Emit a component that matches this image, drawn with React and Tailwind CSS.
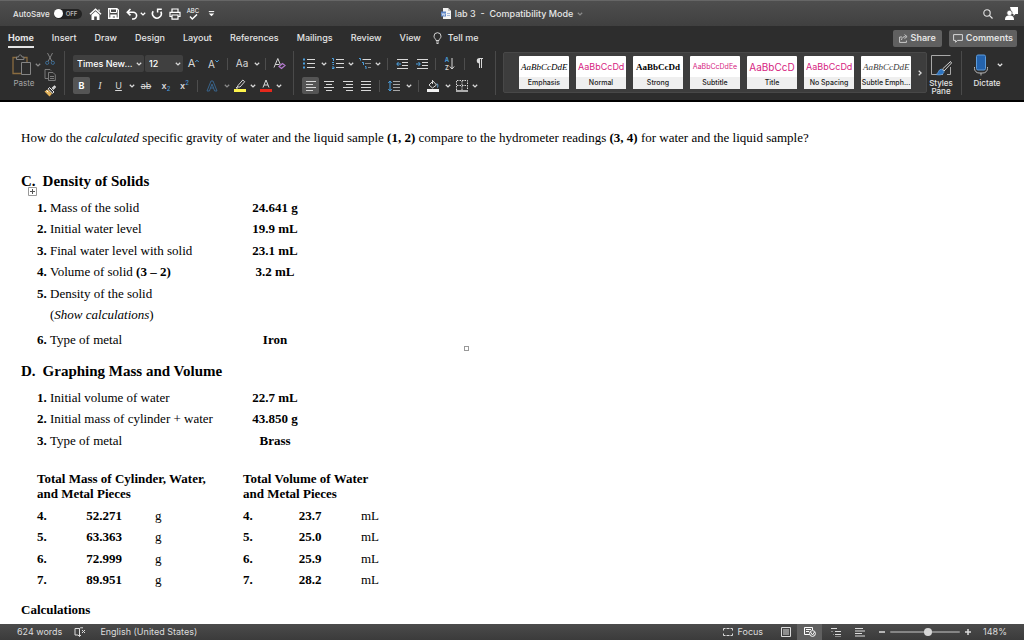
/**
 * App.jsx — word processor window.
 *
 * Title bar, ribbon tabs, Home ribbon, document page and status bar.
 */
import { useState } from 'react'

// ─── Data ────────────────────────────────────────────────────────────────────

const TABS = ['Home', 'Insert', 'Draw', 'Design', 'Layout', 'References', 'Mailings', 'Review', 'View']

const STYLES = [
  { label: 'Emphasis', sample: 'AaBbCcDdE', look: 'font-["Liberation_Serif",serif] italic text-[9px] text-black' },
  { label: 'Normal', sample: 'AaBbCcDd', look: 'text-[9px] text-[#d6247f]' },
  { label: 'Strong', sample: 'AaBbCcDd', look: 'font-["Liberation_Serif",serif] font-bold text-[9px] text-black' },
  { label: 'Subtitle', sample: 'AaBbCcDdEe', look: 'text-[7px] text-[#d6247f]' },
  { label: 'Title', sample: 'AaBbCcD', look: 'text-[10px] text-[#d6247f]' },
  { label: 'No Spacing', sample: 'AaBbCcDd', look: 'text-[9px] text-[#d6247f]' },
  { label: 'Subtle Emph...', sample: 'AaBbCcDdE', look: 'font-["Liberation_Serif",serif] italic text-[9px] text-[#404040]' },
]

const SOLIDS = [
  { no: '1.', label: 'Mass of the solid', value: '24.641 g' },
  { no: '2.', label: 'Initial water level', value: '19.9 mL' },
  { no: '3.', label: 'Final water level with solid', value: '23.1 mL' },
  { no: '4.', label: <>Volume of solid <b>(3 – 2)</b></>, value: '3.2 mL' },
  { no: '5.', label: 'Density of the solid', value: '' },
  { no: '', label: <>(<i>Show calculations</i>)</>, value: '' },
  { no: '6.', label: 'Type of metal', value: 'Iron', tall: true },
]

const GRAPHING = [
  { no: '1.', label: 'Initial volume of water', value: '22.7 mL' },
  { no: '2.', label: 'Initial mass of cylinder + water', value: '43.850 g' },
  { no: '3.', label: 'Type of metal', value: 'Brass' },
]

const TOTALS = [
  { no: '4.', mass: '52.271', volume: '23.7' },
  { no: '5.', mass: '63.363', volume: '25.0' },
  { no: '6.', mass: '72.999', volume: '25.9' },
  { no: '7.', mass: '89.951', volume: '28.2' },
]

// ─── Small building blocks ───────────────────────────────────────────────────

function Icon({ w = 12, h = 12, className = '', children }) {
  return (
    <svg
      width={w}
      height={h}
      viewBox={`0 0 ${w} ${h}`}
      fill="none"
      stroke="currentColor"
      className={`shrink-0 ${className}`}
      aria-hidden="true"
    >
      {children}
    </svg>
  )
}

function Chevron({ className = '' }) {
  return (
    <Icon w={6} h={4} className={className}>
      <path d="M.8 .7 3 2.9 5.2 .7" strokeWidth="1.3" />
    </Icon>
  )
}

function Tool({ label, className = 'w-5', active = false, children }) {
  return (
    <button
      type="button"
      aria-label={label}
      className={`flex h-[17px] shrink-0 items-center justify-center rounded-[2px] ${active ? 'bg-[#555555]' : ''} ${className}`}
    >
      {children}
    </button>
  )
}

function More({ label, className = 'w-[9px]' }) {
  return (
    <Tool label={label} className={className}>
      <Chevron />
    </Tool>
  )
}

// Short separator between tools of one row
function Sep() {
  return (
    <span className="flex w-[9px] shrink-0 justify-center">
      <span className="h-3 w-px bg-[#4d4d4d]" />
    </span>
  )
}

// Full-height separator between ribbon groups
function Divider({ className = 'w-3' }) {
  return (
    <span className={`flex shrink-0 justify-center ${className}`}>
      <span className="mt-px h-[44px] w-px bg-[#4a4a4a]" />
    </span>
  )
}

// ─── Title bar ───────────────────────────────────────────────────────────────

function TitleBar() {
  return (
    <header className="grid h-[26px] grid-cols-[1fr_auto_1fr] items-center border-t border-[#666666] bg-linear-to-b from-[#4e4e4e] to-[#404040] px-[13px] text-[#e6e6e6]">
      <div className="flex items-center">
        <label className="flex items-center gap-1 text-[8px] font-medium">
          AutoSave
          <span className="relative flex h-[10px] w-7 items-center rounded-full bg-[#232323]">
            <input type="checkbox" className="absolute inset-0 appearance-none" />
            <span className="size-[9px] rounded-full bg-white" />
            <span className="pl-[3px] text-[6px] leading-none font-semibold text-[#b5b5b5]">OFF</span>
          </span>
        </label>
        <div className="flex items-center pl-[7px] text-white">
          <button type="button" aria-label="Home" className="w-[19px]">
            <Icon w={13} h={12}>
              <path d="M1 6.2 6.5 1.2 12 6.2" strokeWidth="1.5" />
              <path d="M9.3 1.4h1.4v2.4L9.3 2.6z" fill="currentColor" stroke="none" />
              <path d="M2.5 6.8 6.5 3.2l4 3.6V12H7.8V8.4H5.2V12H2.5z" fill="currentColor" stroke="none" />
            </Icon>
          </button>
          <button type="button" aria-label="Save" className="w-[18px]">
            <Icon w={11} h={11}>
              <path d="M.7 .7h8.2l1.4 1.400v8.200H.7z" strokeWidth="1.4" />
              <path d="M2.500 .7v3.800h6V.7" />
              <path d="M2.300 6.500h6.400V11H7V8.500H4.800V11H2.300z" fill="currentColor" stroke="none" />
            </Icon>
          </button>
          <button type="button" aria-label="Undo" className="w-[14px]">
            <Icon w={12} h={12}>
              <path d="M4.5 1 1.3 4.2l3.2 3.2M1.5 4.2h5.7a3.4 3.4 0 0 1 0 6.8H6" strokeWidth="1.6" />
            </Icon>
          </button>
          <button type="button" aria-label="Undo history" className="w-[11px]">
            <Chevron />
          </button>
          <button type="button" aria-label="Repeat" className="w-[18px]">
            <Icon w={12} h={12}>
              <path d="M2.2 3.3a4.4 4.4 0 1 0 7.6.4" strokeWidth="1.6" />
              <path d="M6.6 4.6V1.2h4.2" strokeWidth="1.5" />
            </Icon>
          </button>
          <button type="button" aria-label="Print" className="w-[18px]">
            <Icon w={12} h={12}>
              <path d="M3 4V1h6v3M3 8.5H1V4.3h10v4.2H9M3 7h6v4.2H3z" strokeWidth="1.2" />
            </Icon>
          </button>
          <button type="button" aria-label="Spelling" className="flex w-[21px] flex-col items-start">
            <span className="text-[6px] leading-[6px]">ABC</span>
            <Icon w={12} h={6}>
              <path d="M3 2.6 5.3 5 10 .4" strokeWidth="1.4" />
            </Icon>
          </button>
          <button type="button" aria-label="Customize toolbar">
            <Icon w={7} h={6}>
              <path d="M.8 .6h5.4" />
              <path d="M.8 2.4h5.4L3.5 5.2z" fill="currentColor" stroke="none" />
            </Icon>
          </button>
        </div>
      </div>
      <h1 className="flex items-center gap-1 text-[9px] font-medium whitespace-pre">
        <Icon w={10} h={11}>
          <path d="M2 0h5l3 3v8H2z" fill="#f2f2f2" stroke="none" />
          <path d="M7 0v3h3" fill="#c4c4c4" stroke="none" />
          <path d="M0 3.500h5v5H0z" fill="#5b83c4" stroke="none" />
          <path d="M1 5l.8 2.500.8-2 .8 2L4.200 5" stroke="#fff" strokeWidth=".6" />
          <path d="M6 5.500h3M6 7.500h3" stroke="#8ea6cf" strokeWidth=".8" />
        </Icon>
        {'lab 3  -  Compatibility Mode'}
        <Chevron className="text-[#8a8a8a]" />
      </h1>
      <div className="flex items-center justify-end gap-3">
        <button type="button" aria-label="Search">
          <Icon w={10} h={10}>
            <circle cx="4" cy="4" r="3.2" strokeWidth="1.1" />
            <path d="M6.400 6.400 9.500 9.500" strokeWidth="1.200" />
          </Icon>
        </button>
        <button type="button" aria-label="Account" className="-mr-[7px]">
          <Icon w={13} h={13} className="text-white">
            <path d="M5 0h8v7h-2.500L8.500 9V7H7z" fill="currentColor" stroke="none" />
            <circle cx="4.500" cy="6" r="2.700" fill="currentColor" stroke="#444" strokeWidth=".7" />
            <path d="M0 13c0-3.500 1.500-4.500 4.500-4.500S9 9.500 9 13z" fill="currentColor" stroke="none" />
          </Icon>
        </button>
      </div>
    </header>
  )
}

// ─── Ribbon tabs ─────────────────────────────────────────────────────────────

function RibbonTabs() {
  const [activeTab, setActiveTab] = useState('Home')

  return (
    <nav className="flex h-6 items-center bg-[#2d2d2d] pr-[7px] pl-2 text-[9px] font-medium text-[#e4e4e4]">
      <div className="flex gap-[18px] pt-px">
        {TABS.map(tab => (
          <button
            key={tab}
            type="button"
            onClick={() => setActiveTab(tab)}
            className={`h-[18px] border-b-2 leading-[14px] ${
              tab === activeTab ? 'border-[#e4e4e4] font-bold' : 'border-transparent'
            }`}
          >
            {tab}
          </button>
        ))}
      </div>
      <button type="button" className="ml-3 flex items-center gap-[6px]">
        <Icon w={9} h={12}>
          <path d="M3 8.500C3 7 1 6.300 1 4.200a3.500 3.500 0 0 1 7 0C8 6.300 6 7 6 8.500zM3 10h3M3.500 11.500h2" strokeWidth=".9" />
        </Icon>
        Tell me
      </button>
      <div className="ml-auto flex gap-[7px] font-semibold">
        <button type="button" className="flex h-[17px] items-center gap-[3px] rounded-[2px] bg-[#606060] px-[6px]">
          <Icon w={9} h={9}>
            <path d="M3 3H.6v5.400h6.800V6.500M2.500 6c.3-2.200 1.800-3.400 4-3.400M5.500.6l2.600 2-2.600 2" strokeWidth=".8" />
          </Icon>
          Share
        </button>
        <button type="button" className="flex h-[17px] items-center gap-[3px] rounded-[2px] bg-[#606060] px-1">
          <Icon w={10} h={9}>
            <path d="M.6.600h8.800v5.800H4.500L2.600 8.300V6.400h-2z" strokeWidth=".9" />
          </Icon>
          Comments
        </button>
      </div>
    </nav>
  )
}

// ─── Home ribbon ─────────────────────────────────────────────────────────────

function ClipboardGroup() {
  return (
    <div className="flex">
      <button type="button" className="flex w-8 flex-col pt-[4px] text-[8px] leading-[10px] text-[#a6a6a6]">
        <span className="flex items-center gap-[3px] pl-1">
          <Icon w={20} h={22}>
            <path d="M5 3.500H1v16h9M12 3.500h3V8" stroke="#8a6c40" strokeWidth="1.300" />
            <path d="M4.500 5.500V3h2c0-1.300.7-2 1.700-2s1.700.7 1.700 2h2v2.500z" stroke="#858585" />
            <path d="M9.500 8.500h9v12h-9z" fill="#2d2d2d" stroke="#858585" />
          </Icon>
          <Chevron className="text-[#8a8a8a]" />
        </span>
        <span className="w-full pt-[2px] text-center">Paste</span>
      </button>
      <div className="ml-1 flex w-3 flex-col gap-1 pt-[3px]">
        <button type="button" aria-label="Cut">
          <Icon w={12} h={12}>
            <path d="M3.500 0 8 8.500M8.500 0 4 8.500" stroke="#8a8a8a" strokeWidth=".9" />
            <circle cx="3.200" cy="9.800" r="1.600" stroke="#3d6c94" />
            <circle cx="8.800" cy="9.800" r="1.600" stroke="#3d6c94" />
          </Icon>
        </button>
        <button type="button" aria-label="Copy">
          <Icon w={12} h={12}>
            <path d="M4 9.500H1v-9h5l1 1M4.500 3.500H9l2.300 2.300v5.700H4.500zM6 7.500h4M6 9.500h4" stroke="#858585" strokeWidth=".9" />
          </Icon>
        </button>
        <button type="button" aria-label="Format painter">
          <Icon w={12} h={12}>
            <path d="M8 3.500 10.500 1 11.500 2 9 4.500" stroke="#ddd" strokeWidth="1.200" />
            <path d="M5.500 2.500 10 7 8.600 8.300 4.200 4z" fill="#2d2d2d" stroke="#eee" />
            <path d="M3.700 4.500 8 8.800 5.500 11.500.5 6.500z" fill="#e5b45a" stroke="none" />
            <path d="m2.500 5.500 1.700 1.700" stroke="#fff" />
          </Icon>
        </button>
      </div>
    </div>
  )
}

function FontGroup() {
  return (
    <div className="flex shrink-0 flex-col gap-[5px] pt-[5px] text-[#d8d8d8]">
      <div className="flex items-center">
        <span className="grid h-[17px] w-[71px] grid-cols-[1fr_auto] items-center rounded-[2px] bg-[#404040] pr-[2px]">
          <select aria-label="Font" className="col-span-2 col-start-1 row-start-1 h-[17px] appearance-none pl-1 text-[9px] font-medium text-white">
            <option>Times New...</option>
          </select>
          <Chevron className="pointer-events-none col-start-2 row-start-1" />
        </span>
        <span className="ml-px grid h-[17px] w-[38px] grid-cols-[1fr_auto] items-center rounded-[2px] bg-[#404040] pr-[2px]">
          <select aria-label="Font size" className="col-span-2 col-start-1 row-start-1 h-[17px] appearance-none pl-1 text-[9px] font-medium text-white">
            <option>12</option>
          </select>
          <Chevron className="pointer-events-none col-start-2 row-start-1" />
        </span>
        <Tool label="Grow font" className="w-[21px]">
          <span className="text-[11px] leading-none">A</span>
          <Icon w={4} h={10}><path d="M.3 3 2 1.200 3.700 3" stroke="#4ba0e0" /></Icon>
        </Tool>
        <Tool label="Shrink font" className="w-[19px]">
          <span className="text-[10px] leading-none">A</span>
          <Icon w={4} h={10}><path d="M.3 1.200 2 3 3.700 1.200" stroke="#4ba0e0" /></Icon>
        </Tool>
        <Sep />
        <Tool label="Change case">
          <span className="text-[10px]">Aa</span>
        </Tool>
        <More label="Case options" />
        <Sep />
        <Tool label="Clear formatting" className="w-[18px]">
          <Icon w={13} h={13}>
            <path d="M1 10.500 4.800 1.500l2.500 6M2.400 7.500h4" />
            <path d="m6 9.500 3.500-3 2.500 2-3.500 3z" stroke="#b57ad0" strokeWidth="1.200" />
          </Icon>
        </Tool>
      </div>
      <div className="flex items-center">
        <Tool label="Bold" active className="w-[17px]">
          <span className="text-[9px] font-bold text-white">B</span>
        </Tool>
        <Tool label="Italic">
          <span className='font-["Liberation_Serif",serif] text-[10px] italic'>I</span>
        </Tool>
        <Tool label="Underline" className="w-[17px]">
          <span className="text-[9px] underline">U</span>
        </Tool>
        <More label="Underline options" />
        <Tool label="Strikethrough">
          <span className="text-[9px] line-through">ab</span>
        </Tool>
        <Tool label="Subscript">
          <span className="text-[9px] font-semibold">x</span>
          <span className="pt-[6px] text-[6px] leading-none text-[#4ba0e0]">2</span>
        </Tool>
        <Tool label="Superscript" className="w-[17px]">
          <span className="text-[9px] font-semibold">x</span>
          <span className="pb-[6px] text-[6px] leading-none text-[#4ba0e0]">2</span>
        </Tool>
        <Sep />
        <Tool label="Text effects">
          <Icon w={12} h={12}>
            <path d="M1 11 5 1h2l4 10H8.600L6 4 3.400 11zM4 8h4" stroke="#38638a" />
          </Icon>
        </Tool>
        <More label="Text effect options" className="w-[9px] text-[#8a8a8a]" />
        <Tool label="Highlight" className="w-[17px]">
          <Icon w={12} h={13}>
            <path d="M4 6.500 8.800 1l1.900 1.700L6 8H3.300zM3.300 8 2 9h2" />
            <path d="M0 10h12v3H0z" fill="#fdf34c" stroke="none" />
          </Icon>
        </Tool>
        <More label="Highlight colours" />
        <Tool label="Font colour" className="w-[17px]">
          <Icon w={12} h={13}>
            <path d="M3 8.500 6 1l3 7.500M4 6h4" />
            <path d="M0 10h12v3H0z" fill="#e5281c" stroke="none" />
          </Icon>
        </Tool>
        <More label="Font colours" />
      </div>
    </div>
  )
}

function ParagraphGroup() {
  return (
    <div className="flex shrink-0 flex-col gap-[5px] pt-[5px] text-[#d8d8d8]">
      <div className="flex items-center">
        <Tool label="Bullets">
          <Icon>
            <path d="M4 1.500h8M4 5.500h8M4 9.500h8" />
            <path d="M0 .5h2v2H0zM0 4.500h2v2H0zM0 8.500h2v2H0z" fill="#4ba0e0" stroke="none" />
          </Icon>
        </Tool>
        <More label="Bullet options" className="w-[10px]" />
        <Tool label="Numbering" className="w-[17px]">
          <Icon>
            <path d="M4 1.500h8M4 5.500h8M4 9.500h8" />
            <path d="M0 .5h1.500v2.500M0 4.500h2M.5 6.500H2M0 9h2v1.500H0" stroke="#4ba0e0" />
          </Icon>
        </Tool>
        <More label="Numbering options" className="w-[10px]" />
        <Tool label="Multilevel list" className="w-[17px]">
          <Icon>
            <path d="M3.500 1.500H12" />
            <path d="M6 5.500h6M9 9.500h3" stroke="#8a8a8a" />
            <path d="M0 .5h1.500v2M3 4.500h1.500v2.500M6 8.500h1v2.500" stroke="#4ba0e0" />
          </Icon>
        </Tool>
        <More label="Multilevel options" className="w-[10px]" />
        <Sep />
        <Tool label="Decrease indent">
          <Icon>
            <path d="M1 1.500h11M6 4.500h6M6 7.500h6M1 10.500h11" />
            <path d="M5 6H.8M2.500 4 .8 6l1.700 2" stroke="#4ba0e0" />
          </Icon>
        </Tool>
        <Tool label="Increase indent" className="w-[19px]">
          <Icon>
            <path d="M1 1.500h11M6 4.500h6M6 7.500h6M1 10.500h11" />
            <path d="M0 6h4.200M2.500 4l1.700 2-1.700 2" stroke="#4ba0e0" />
          </Icon>
        </Tool>
        <Sep />
        <Tool label="Sort">
          <span className="flex flex-col text-[6px] leading-[8px] font-semibold">
            <span className="text-[#4ba0e0]">A</span>
            <span>Z</span>
          </span>
          <Icon w={6} h={12}>
            <path d="M3 0v11M.8 8.500 3 11l2.200-2.500" />
          </Icon>
        </Tool>
        <Sep />
        <Tool label="Show marks">
          <Icon w={8} h={11}>
            <path d="M4 .5h4M4.500 .5V10M6.500 .5V10" />
            <path d="M4.500 0v5.500a2.700 2.700 0 0 1 0-5.500z" fill="currentColor" stroke="none" />
          </Icon>
        </Tool>
      </div>
      <div className="flex items-center pl-[3px]">
        <Tool label="Align left" active className="w-[17px]">
          <Icon w={10} h={11}><path d="M0 1.500h10M0 4.500h7M0 7.500h10M0 10.500h7" /></Icon>
        </Tool>
        <Tool label="Align centre">
          <Icon w={10} h={11}><path d="M0 1.500h10M2 4.500h6M0 7.500h10M2 10.500h6" /></Icon>
        </Tool>
        <Tool label="Align right" className="w-[18px]">
          <Icon w={10} h={11}><path d="M0 1.500h10M3 4.500h7M0 7.500h10M3 10.500h7" /></Icon>
        </Tool>
        <Tool label="Justify" className="w-[18px]">
          <Icon w={10} h={11}><path d="M0 1.500h10M0 4.500h10M0 7.500h10M0 10.500h10" /></Icon>
        </Tool>
        <Sep />
        <Tool label="Line spacing">
          <Icon>
            <path d="M5 1.500h7M5 4.500h7M5 7.500h7M5 10.500h7" stroke="#a8a8a8" />
            <path d="M2 1v10M.3 3 2 1l1.700 2M.3 9 2 11l1.700-2" stroke="#4ba0e0" />
          </Icon>
        </Tool>
        <More label="Line spacing options" className="w-[10px]" />
        <Sep />
        <Tool label="Shading">
          <Icon w={12} h={13}>
            <path d="M5.500 1v4M2 6l4-4 3.500 4-4 3z" />
            <path d="M10 4.500c1 .8 1 2.500.5 4" stroke="#6fb3e6" />
            <path d="M0 10h12v3H0z" fill="#f2f2f2" stroke="none" />
          </Icon>
        </Tool>
        <More label="Shading colours" className="w-[10px]" />
        <Tool label="Borders" className="w-[17px]">
          <Icon w={12} h={12}>
            <path d="M.5 10V.5h11V10M6 1v9M1 5.500h10" strokeDasharray="1.500 1" />
            <path d="M0 11h12" strokeWidth="1.500" />
          </Icon>
        </Tool>
        <More label="Border options" className="w-[10px]" />
      </div>
    </div>
  )
}

function StyleGallery() {
  return (
    <div className="mt-[2px] ml-[2px] flex h-[41px] min-w-0 flex-1 items-center rounded-[2px] border border-[#484848] bg-[#3d3d3d] pl-[15px]">
      <div className="flex min-w-0 gap-[7px] overflow-hidden">
        {STYLES.map(style => (
          <button
            key={style.label}
            type="button"
            className="flex h-[33px] w-[50px] shrink-0 flex-col rounded-[1px] bg-white"
          >
            <span className={`h-[21px] w-full px-[2px] text-center leading-[22px] ${style.look}`}>
              {style.sample}
            </span>
            <span className="h-3 w-full bg-[#efefef] text-center text-[7px] leading-[12px] font-medium whitespace-nowrap text-[#222222]">
              {style.label}
            </span>
          </button>
        ))}
      </div>
      <button type="button" aria-label="More styles" className="ml-auto pr-[4px] text-[#e0e0e0]">
        <Icon w={4} h={6}><path d="M.7.700 3.200 3 .7 5.300" strokeWidth="1.200" /></Icon>
      </button>
    </div>
  )
}

function Ribbon() {
  return (
    <section className="flex h-[52px] border-b-2 border-black bg-[#2d2d2d] pr-[20px] pl-2">
      <ClipboardGroup />
      <Divider className="w-[17px]" />
      <FontGroup />
      <Divider className="w-[11px]" />
      <ParagraphGroup />
      <Divider />
      <StyleGallery />
      <button type="button" className="flex w-7 shrink-0 flex-col items-center pt-[4px] text-[8px] leading-[8px] font-medium text-[#e4e4e4]">
        <Icon w={22} h={22}>
          <path d="M13 20.500H1.500v-19h19M20.500 13v7.500H17" stroke="#a8a8a8" />
          <path d="M20.500 7.500 12.500 15l1.500 2 7.500-8z" fill="#2d2d2d" stroke="#d8d8d8" />
          <path d="M6 20.500c2.500-.5 2-5 5.500-5.500l2.500 2.500c0 3-4 4-8 3z" fill="#2e74c0" stroke="#6aa5df" strokeWidth=".7" />
        </Icon>
        <span className="pt-[3px]">Styles Pane</span>
      </button>
      <Divider />
      <button type="button" className="flex w-[37px] shrink-0 flex-col pt-[4px] text-[8px] leading-[10px] font-medium text-[#e4e4e4]">
        <span className="flex items-center gap-2 pl-[6px]">
          <Icon w={16} h={22}>
            <rect x="3.500" y="1" width="9" height="15" rx="1.500" fill="#2463ad" stroke="#5c9bdb" />
            <path d="M1.500 13v1.500a4.500 4.500 0 0 0 4.500 4.500h4a4.500 4.500 0 0 0 4.500-4.500V13M8 19v2.500" stroke="#b8b8b8" />
          </Icon>
          <Chevron />
        </span>
        <span className="pt-[2px] pl-[3px]">Dictate</span>
      </button>
    </section>
  )
}

// ─── Document ────────────────────────────────────────────────────────────────

function ReadingTable({ label, rows }) {
  return (
    <table aria-label={label} className="mt-1 ml-4 table-fixed text-[13px] leading-[15px]">
      <colgroup>
        <col className="w-[13px]" />
        <col className="w-[185px]" />
        <col className="w-20" />
      </colgroup>
      <tbody>
        {rows.map((row, i) => (
          <tr key={i} className={row.tall ? 'h-[28px]' : 'odd:h-[22px] even:h-[21px]'}>
            <td className="p-0 font-bold">{row.no}</td>
            <td className="p-0">{row.label}</td>
            <td className="p-0 text-center font-bold">{row.value}</td>
          </tr>
        ))}
      </tbody>
    </table>
  )
}

function TotalsTable() {
  return (
    <table className="mt-5 ml-4 table-fixed text-left text-[13px] leading-[15px]">
      <colgroup>
        <col className="w-12" />
        <col className="w-[38px]" />
        <col className="w-[120px]" />
        <col className="w-12" />
        <col className="w-[38px]" />
        <col className="w-[120px]" />
      </colgroup>
      <thead>
        <tr>
          <th colSpan={3} className="p-0 pb-[3px]">
            Total Mass of Cylinder, Water,<br />and Metal Pieces
          </th>
          <th colSpan={3} className="p-0 pb-[3px]">
            Total Volume of Water<br />and Metal Pieces
          </th>
        </tr>
      </thead>
      <tbody>
        {TOTALS.map(row => (
          <tr key={row.no} className="odd:h-[22px] even:h-[21px]">
            <td className="p-0 font-bold">{row.no}</td>
            <td className="p-0 text-center font-bold">{row.mass}</td>
            <td className="p-0 pl-8">g</td>
            <td className="p-0 font-bold">{row.no}</td>
            <td className="p-0 text-center font-bold">{row.volume}</td>
            <td className="p-0 pl-8">mL</td>
          </tr>
        ))}
      </tbody>
    </table>
  )
}

function Document() {
  return (
    <main className='flex-1 bg-white px-[21px] pt-[26px] font-["Liberation_Serif","Times_New_Roman",serif] text-[13px] leading-5 text-black'>
      <p>
        How do the <i>calculated</i> specific gravity of water and the liquid sample <b>(1, 2)</b> compare
        to the hydrometer readings <b>(3, 4)</b> for water and the liquid sample?
      </p>

      <section className="relative mt-[22px]">
        <h2 className="flex gap-[7px] text-[15px] leading-[22px] font-bold">
          <span>C.</span>Density of Solids
        </h2>
        {/* Table move and resize handles float over the text */}
        <span className="absolute top-[17px] left-[7px] bg-white text-[#555555]">
          <Icon w={9} h={9}>
            <path d="M.5.500h8v8h-8z" stroke="#999" />
            <path d="M4.500 2v5M2 4.500h5" />
          </Icon>
        </span>
        <ReadingTable label="Density of Solids" rows={SOLIDS} />
        <span className="absolute bottom-[2px] left-[443px] size-[5px] border border-[#999999] bg-white" />
      </section>

      <section className="mt-[7px]">
        <h2 className="flex gap-[7px] text-[15px] leading-[22px] font-bold">
          <span>D.</span>Graphing Mass and Volume
        </h2>
        <ReadingTable label="Graphing Mass and Volume" rows={GRAPHING} />
        <TotalsTable />
      </section>

      <h3 className="mt-[10px] font-bold">Calculations</h3>
    </main>
  )
}

// ─── Status bar ──────────────────────────────────────────────────────────────

function StatusBar() {
  const [zoom, setZoom] = useState(148)

  return (
    <footer className="flex h-4 items-center bg-linear-to-b from-[#4b4b4b] to-[#3b3b3b] px-[17px] text-[9px] text-[#dcdcdc]">
      <span>624 words</span>
      <button type="button" aria-label="Proofing" className="ml-3">
        <Icon w={12} h={10}>
          <path d="M5.500 9.500V1.500H1v6.500h3l1.500 1.500L7 8M5.500 1.500 6.500 .8H9M8 3l3 3M11 3 8 6" />
        </Icon>
      </button>
      <span className="ml-[14px]">English (United States)</span>

      <div className="ml-auto flex items-center">
        <button type="button" className="flex items-center gap-[5px]">
          <Icon w={10} h={8}>
            <path d="M.5 2.500v-2h2M7.500.5h2v2M9.500 5.500v2h-2M2.500 7.500h-2v-2M3.500.5h3M3.500 7.500h3" />
          </Icon>
          Focus
        </button>
        <button type="button" aria-label="Print layout" className="ml-[11px] flex h-4 w-[23px] items-center justify-center">
          <Icon w={10} h={10}>
            <path d="M.5.500h9v9h-9z" />
            <path d="M2 3h6M2 5h6M2 7h6" />
          </Icon>
        </button>
        <button type="button" aria-label="Web layout" className="flex h-4 w-[25px] items-center justify-center bg-[#606060] text-white">
          <Icon w={12} h={10}>
            <path d="M6 7.500H.5v-7h8V3M2 2.500h5M2 4.500h3" />
            <circle cx="8.500" cy="6.500" r="2.900" fill="#606060" />
            <path d="m6.500 5 2 3 2-3" strokeWidth=".9" />
          </Icon>
        </button>
        <button type="button" aria-label="Outline" className="flex h-4 w-7 items-center justify-center">
          <Icon w={10} h={10}>
            <path d="M0 1.500h6M4 4.500h6M4 7.500h6" />
            <path d="M0 4.500h2M2 7.500h1M4 9.500h6" stroke="#8a8a8a" />
          </Icon>
        </button>
        <button type="button" aria-label="Draft" className="flex h-4 w-5 items-center justify-center">
          <Icon w={10} h={10}>
            <path d="M0 1.500h8M0 4h10M0 6.500h7M0 9h10" />
          </Icon>
        </button>
        <button type="button" aria-label="Zoom out" className="ml-[9px]" onClick={() => setZoom(zoom - 10)}>
          <Icon w={6} h={6}><path d="M0 3h6" strokeWidth="1.500" /></Icon>
        </button>
        <input
          type="range"
          aria-label="Zoom"
          min="10"
          max="260"
          value={zoom}
          onChange={e => setZoom(Number(e.target.value))}
          className="mx-[5px] h-[2px] w-[70px] appearance-none rounded-full bg-[#858585] [&::-webkit-slider-thumb]:size-2 [&::-webkit-slider-thumb]:appearance-none [&::-webkit-slider-thumb]:rounded-full [&::-webkit-slider-thumb]:bg-[#d6d6d6]"
        />
        <button type="button" aria-label="Zoom in" onClick={() => setZoom(zoom + 10)}>
          <Icon w={6} h={6}><path d="M0 3h6M3 0v6" strokeWidth="1.500" /></Icon>
        </button>
        <span className="ml-3">{zoom}%</span>
      </div>
    </footer>
  )
}

// ─── Page root ───────────────────────────────────────────────────────────────

export default function App() {
  return (
    <div className='flex min-h-screen flex-col bg-white font-["Inter",sans-serif]'>
      <TitleBar />
      <RibbonTabs />
      <Ribbon />
      <Document />
      <StatusBar />
    </div>
  )
}
